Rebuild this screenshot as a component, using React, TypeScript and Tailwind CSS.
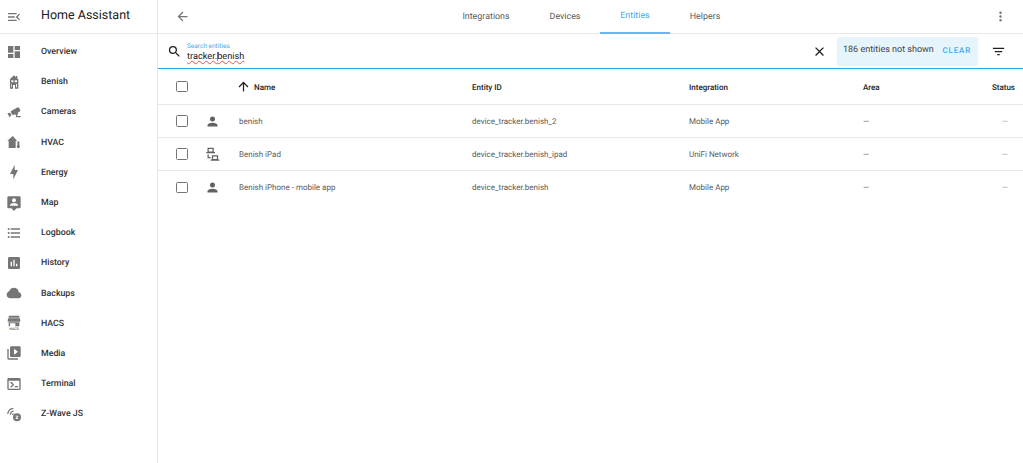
import React from 'react'

type IconProps = { d: string; className?: string }

function Icon({ d, className = 'h-[16px] w-[16px] text-[#757575]' }: IconProps) {
  return (
    <svg viewBox="0 0 24 24" fill="currentColor" fillRule="evenodd" className={`shrink-0 ${className}`}>
      <path d={d} />
    </svg>
  )
}

// not in the mdi set we have here, drawn by hand
function HacsIcon() {
  return (
    <svg viewBox="0 0 24 24" className="h-[16px] w-[16px] shrink-0 text-[#757575]" fill="currentColor">
      <path d="M4 1H20V4H4Z M3 5H21L21.5 10H2.5Z M4 11H20V17H14V12.5H6V17H4Z M15.5 12.5H18.5V15H15.5Z" />
      <text x="12" y="23" textAnchor="middle" fontSize="5.5" fontWeight="700" fontFamily="Roboto, sans-serif">
        HACS
      </text>
    </svg>
  )
}

function ZWaveIcon() {
  return (
    <svg viewBox="0 0 24 24" className="h-[16px] w-[16px] shrink-0 text-[#757575]" fill="none">
      <path d="M11 3.5C6.5 4 3.3 7.5 2.5 12" stroke="currentColor" strokeWidth="1.8" />
      <path d="M11.5 7.5C8.8 8 6.8 10 6.3 13" stroke="currentColor" strokeWidth="1.8" />
      <path d="M11.5 11.5C10.6 11.8 10.2 12.3 10 13.3" stroke="currentColor" strokeWidth="1.8" />
      <circle cx="16.5" cy="17" r="6" fill="currentColor" />
      <path d="M14.5 14.5H18.5V15.8L16.2 18.4H18.5V19.5H14.5V18.2L16.8 15.6H14.5Z" fill="#fff" />
    </svg>
  )
}

const paths = {
  menuOpen: 'M21,15.61L19.59,17L14.58,12L19.59,7L21,8.39L17.44,12L21,15.61M3,6H16V8H3V6M3,13V11H13V13H3M3,18V16H16V18H3Z',
  dashboard: 'M13,3V9H21V3M13,21H21V11H13M3,21H11V15H3M3,13H11V3H3V13Z',
  home: 'M6 22V7.5L12 2L15 4.8V3H17V6.6L18.5 8V22H13.5V16.5H10.5V22Z M8 9.5V12.5H11V9.5Z M13 9.5V12.5H16.5V9.5Z M8 15V20H9V15Z M15 15V20H16.5V15Z',
  cctv: 'M18.15,4.94C17.77,4.91 17.37,5 17,5.2L8.35,10.2C7.39,10.76 7.07,12 7.62,12.94L9.12,15.53C9.67,16.5 10.89,16.82 11.85,16.27L13.65,15.23C13.92,15.69 14.32,16.06 14.81,16.27V18.04C14.81,19.13 15.7,20 16.81,20H22V18.04H16.81V16.27C17.72,15.87 18.31,14.97 18.31,14C18.31,13.54 18.19,13.11 17.97,12.73L20.5,11.27C21.47,10.71 21.8,9.5 21.24,8.53L19.74,5.94C19.4,5.34 18.79,5 18.15,4.94M6.22,13.17L2,13.87L2.75,15.17L4.75,18.63L5.5,19.93L8.22,16.63L6.22,13.17Z',
  hvac: 'M10 3L2 10H4V21H14.5V10.5H16V9.5L10 3Z M18.5 11C17.7 11 17 11.7 17 12.5V17C16.2 17.6 15.9 18.5 16.2 19.5C16.5 20.6 17.4 21.3 18.5 21.3C19.6 21.3 20.5 20.6 20.8 19.5C21.1 18.5 20.8 17.6 20 17V12.5C20 11.7 19.3 11 18.5 11Z',
  flash: 'M11 15H6L13 1V9H18L11 23V15Z',
  map: 'M20 2H4C2.9 2 2 2.9 2 4V18C2 19.1 2.9 20 4 20H8L12 24L16 20H20C21.1 20 22 19.1 22 18V4C22 2.9 21.1 2 20 2M12 5C13.66 5 15 6.34 15 8S13.66 11 12 11 9 9.66 9 8 10.34 5 12 5M18 16H6V15C6 13 10 11.9 12 11.9S18 13 18 15V16Z',
  list: 'M7,5H21V7H7V5M7,13V11H21V13H7M4,4.5A1.5,1.5 0 0,1 5.5,6A1.5,1.5 0 0,1 4,7.5A1.5,1.5 0 0,1 2.5,6A1.5,1.5 0 0,1 4,4.5M4,10.5A1.5,1.5 0 0,1 5.5,12A1.5,1.5 0 0,1 4,13.5A1.5,1.5 0 0,1 2.5,12A1.5,1.5 0 0,1 4,10.5M7,19V17H21V19H7M4,16.5A1.5,1.5 0 0,1 5.5,18A1.5,1.5 0 0,1 4,19.5A1.5,1.5 0 0,1 2.5,18A1.5,1.5 0 0,1 4,16.5Z',
  chart: 'M5 3H19C20.1 3 21 3.9 21 5V19C21 20.1 20.1 21 19 21H5C3.9 21 3 20.1 3 19V5C3 3.9 3.9 3 5 3Z M7 10V17H9V10Z M11 7V17H13V7Z M15 13V17H17V13Z',
  cloud: 'M6.5 20Q4.22 20 2.61 18.43 1 16.85 1 14.58 1 12.63 2.17 11.1 3.35 9.57 5.25 9.15 5.88 6.85 7.75 5.43 9.63 4 12 4 14.93 4 16.96 6.04 19 8.07 19 11 20.73 11.2 21.86 12.5 23 13.78 23 15.5 23 17.38 21.69 18.69 20.38 20 18.5 20Z',
  media: 'M4,6H2V20A2,2 0 0,0 4,22H18V20H4M20,2H8A2,2 0 0,0 6,4V16A2,2 0 0,0 8,18H20A2,2 0 0,0 22,16V4A2,2 0 0,0 20,2M12,14.5V5.5L18,10L12,14.5Z',
  console: 'M20,19V7H4V19H20M20,3A2,2 0 0,1 22,5V19A2,2 0 0,1 20,21H4A2,2 0 0,1 2,19V5A2,2 0 0,1 4,3H20M13,17V15H18V17H13M9.58,13L5.57,9H8.4L11.7,12.3C12.09,12.69 12.09,13.33 11.7,13.72L8.42,17H5.59L9.58,13Z',
  arrowLeft: 'M20,11V13H8L13.5,18.5L12.08,19.92L4.16,12L12.08,4.08L13.5,5.5L8,11H20Z',
  arrowUp: 'M13,20H11V8L5.5,13.5L4.08,12.08L12,4.16L19.92,12.08L18.5,13.5L13,8V20Z',
  dots: 'M12,16A2,2 0 0,1 14,18A2,2 0 0,1 12,20A2,2 0 0,1 10,18A2,2 0 0,1 12,16M12,10A2,2 0 0,1 14,12A2,2 0 0,1 12,14A2,2 0 0,1 10,12A2,2 0 0,1 12,10M12,4A2,2 0 0,1 14,6A2,2 0 0,1 12,8A2,2 0 0,1 10,6A2,2 0 0,1 12,4Z',
  magnify: 'M9.5,3A6.5,6.5 0 0,1 16,9.5C16,11.11 15.41,12.59 14.44,13.73L14.71,14H15.5L20.5,19L19,20.5L14,15.5V14.71L13.73,14.44C12.59,15.41 11.11,16 9.5,16A6.5,6.5 0 0,1 3,9.5A6.5,6.5 0 0,1 9.5,3M9.5,5C7,5 5,7 5,9.5C5,12 7,14 9.5,14C12,14 14,12 14,9.5C14,7 12,5 9.5,5Z',
  close: 'M19,6.41L17.59,5L12,10.59L6.41,5L5,6.41L10.59,12L5,17.59L6.41,19L12,13.41L17.59,19L19,17.59L13.41,12L19,6.41Z',
  filter: 'M6,13H18V11H6M3,6V8H21V6M10,18H14V16H10V18Z',
  account: 'M12,4A4,4 0 0,1 16,8A4,4 0 0,1 12,12A4,4 0 0,1 8,8A4,4 0 0,1 12,4M12,14C16.42,14 20,15.79 20,18V20H4V18C4,15.79 7.58,14 12,14Z',
  devices: 'M4 1H14V8H16V10H2V8H4Z M6 3V7H12V3Z M11 13H21V20H23V22H9V20H11Z M13 15V19H19V15Z M4 12H6V16H9V18H4Z',
}

const navItems: { label: string; icon: React.ReactNode }[] = [
  { label: 'Overview', icon: <Icon d={paths.dashboard} /> },
  { label: 'Benish', icon: <Icon d={paths.home} /> },
  { label: 'Cameras', icon: <Icon d={paths.cctv} /> },
  { label: 'HVAC', icon: <Icon d={paths.hvac} /> },
  { label: 'Energy', icon: <Icon d={paths.flash} /> },
  { label: 'Map', icon: <Icon d={paths.map} /> },
  { label: 'Logbook', icon: <Icon d={paths.list} /> },
  { label: 'History', icon: <Icon d={paths.chart} /> },
  { label: 'Backups', icon: <Icon d={paths.cloud} /> },
  { label: 'HACS', icon: <HacsIcon /> },
  { label: 'Media', icon: <Icon d={paths.media} /> },
  { label: 'Terminal', icon: <Icon d={paths.console} /> },
  { label: 'Z-Wave JS', icon: <ZWaveIcon /> },
]

const rows = [
  { name: 'benish', icon: paths.account, entityId: 'device_tracker.benish_2', integration: 'Mobile App' },
  { name: 'Benish iPad', icon: paths.devices, entityId: 'device_tracker.benish_ipad', integration: 'UniFi Network' },
  { name: 'Benish iPhone - mobile app', icon: paths.account, entityId: 'device_tracker.benish', integration: 'Mobile App' },
]

const tabs = [
  { label: 'Integrations', width: 'w-[88px]' },
  { label: 'Devices', width: 'w-[70px]' },
  { label: 'Entities', width: 'w-[70px]', active: true },
  { label: 'Helpers', width: 'w-[70px]' },
]

function Checkbox() {
  return <div className="h-[11.5px] w-[11.5px] rounded-[1.5px] border-[1.5px] border-[#757575]" />
}

function Sidebar() {
  return (
    <aside className="flex h-full w-[158px] shrink-0 flex-col border-r border-[#e8e8e8]">
      <div className="flex h-[34px] shrink-0 items-center border-b border-[#e8e8e8] pl-[5.5px]">
        <Icon d={paths.menuOpen} />
        <span className="ml-[19.5px] text-[12.5px] text-[#212121]">Home Assistant</span>
      </div>
      <nav className="flex flex-col pt-[2.5px]">
        {navItems.map((item) => (
          <div key={item.label} className="flex h-[30.2px] items-center pl-[5.5px]">
            {item.icon}
            <span className="ml-[19.5px] pt-[2px] text-[8.8px] font-medium text-[#303030]">{item.label}</span>
          </div>
        ))}
      </nav>
    </aside>
  )
}

function Topbar() {
  return (
    <div className="flex h-[34px] shrink-0 items-center border-b border-[#e8e8e8]">
      <div className="flex flex-1 pl-[17px]">
        <Icon d={paths.arrowLeft} className="h-[15px] w-[15px] text-[#757575]" />
      </div>
      <div className="mr-[1px] flex h-full">
        {tabs.map((tab) => (
          <div
            key={tab.label}
            className={`flex h-[34px] items-center justify-center pt-[2px] text-[8.9px] ${tab.width} ${
              tab.active ? 'border-b-2 border-[#64b8f0] pb-[1px] text-[#42a9ea]' : 'text-[#5a5a5a]'
            }`}
          >
            {tab.label}
          </div>
        ))}
      </div>
      <div className="flex flex-1 justify-end pr-[15px]">
        <Icon d={paths.dots} className="h-[15px] w-[15px] text-[#757575]" />
      </div>
    </div>
  )
}

function SearchBar() {
  return (
    <div className="flex h-[35px] shrink-0 items-center border-b border-[#29aaf0]">
      <div className="ml-[9px] text-[#212121]">
        <Icon d={paths.magnify} className="h-[15px] w-[15px]" />
      </div>
      <div className="ml-[5px] flex flex-1 flex-col pt-[3px]">
        <span className="text-[6.5px] leading-[8px] text-[#42a9ea]">Search entities</span>
        <span className="text-[9.2px] leading-[13px] text-[#212121] underline decoration-[#ef5350] decoration-wavy decoration-[0.5px]">
          tracker.
          <span className="-mr-px inline-block h-[9px] w-px bg-[#42a9ea] align-middle" />
          benish
        </span>
      </div>
      <div className="mr-[10px] text-[#212121]">
        <Icon d={paths.close} className="h-[15px] w-[15px]" />
      </div>
      <div className="flex h-[29px] w-[141px] items-center justify-between rounded-[2px] bg-[#e6f4fc] px-[6px] pr-[7px]">
        <span className="text-[9px] text-[#424242]">186 entities not shown</span>
        <span className="text-[8px] font-medium tracking-[0.8px] text-[#42a9ea]">CLEAR</span>
      </div>
      <div className="ml-[13px] mr-[17px] text-[#212121]">
        <Icon d={paths.filter} className="h-[15px] w-[15px]" />
      </div>
    </div>
  )
}

function EntityTable() {
  const cols = 'grid grid-cols-[18px_45px_25px_208px_217px_174px_1fr] items-center pl-[18px] pr-[8px]'
  return (
    <div className="flex flex-col">
      <div className={`${cols} h-[36px] border-b border-[#e8e8e8] text-[8px] font-medium text-[#212121]`}>
        <Checkbox />
        <span />
        <div className="-ml-[3px] text-[#212121]">
          <Icon d={paths.arrowUp} className="h-[15px] w-[15px]" />
        </div>
        <span className="-ml-[10px] pt-[2px]">Name</span>
        <span className="pt-[2px]">Entity ID</span>
        <span className="pt-[2px]">Integration</span>
        <span className="flex justify-between pt-[2px]">
          <span>Area</span>
          <span>Status</span>
        </span>
      </div>
      {rows.map((row, i) => (
        <div
          key={row.entityId}
          className={`${cols} h-[33px] text-[8px] text-[#5a5a5a] ${i < rows.length - 1 ? 'border-b border-[#e8e8e8]' : ''}`}
        >
          <Checkbox />
          <Icon d={row.icon} className="ml-[10.5px] h-[15px] w-[15px] text-[#616161]" />
          <span className="col-span-2 pt-[1px]">{row.name}</span>
          <span className="pt-[1px]">{row.entityId}</span>
          <span className="pt-[1px]">{row.integration}</span>
          <span className="flex justify-between pt-[1px]">
            <span>—</span>
            <span className="pr-[7px] text-[#9e9e9e]">—</span>
          </span>
        </div>
      ))}
    </div>
  )
}

export default function App() {
  return (
    <div className="flex h-[463px] w-[1023px] overflow-hidden bg-white font-['Roboto',sans-serif] [text-rendering:geometricPrecision]">
      <Sidebar />
      <main className="flex min-w-0 flex-1 flex-col">
        <Topbar />
        <SearchBar />
        <EntityTable />
      </main>
    </div>
  )
}
